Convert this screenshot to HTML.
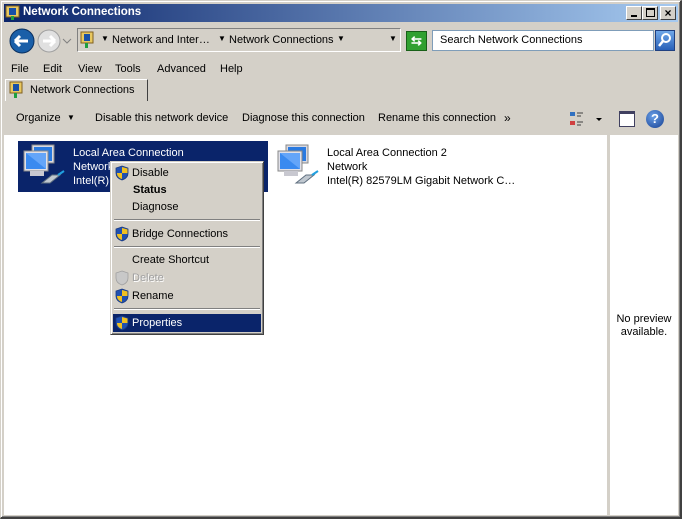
<!DOCTYPE html>
<html><head><meta charset="utf-8"><style>
*{margin:0;padding:0;box-sizing:border-box}
body{width:682px;height:519px;overflow:hidden;background:#d4d0c8;font-family:"Liberation Sans",sans-serif;font-size:11px;color:#000;position:relative}
.a{position:absolute}
.t{white-space:nowrap}
</style></head><body>
<div class="a" style="left:0;top:0;width:682px;height:519px;border-top:1px solid #d4d0c8;border-left:1px solid #d4d0c8;border-right:2px solid #404040;border-bottom:2px solid #404040;box-shadow:inset 1px 1px 0 #fff,inset -1px -1px 0 #808080"></div>
<div class="a" style="left:4px;top:4px;width:674px;height:18px;background:linear-gradient(90deg,#0a246a,#a6caf0)"></div>
<svg class="a" style="left:5px;top:5px" width="16" height="16"><rect x="1" y="1" width="13" height="11" fill="#e8c860" stroke="#806020"/><rect x="4" y="3" width="7" height="7" fill="#1850a8"/><rect x="6" y="11" width="3" height="4" fill="#20a040"/></svg>
<div class="a t" style="left:23px;top:6px;color:#fff;font-weight:bold;font-size:11.5px">Network Connections</div>
<div class="a" style="left:626px;top:6px;width:16px;height:14px;background:#d4d0c8;border:1px solid;border-color:#fff #404040 #404040 #fff"><div class="a" style="left:4px;top:8px;width:6px;height:2px;background:#000"></div></div>
<div class="a" style="left:642px;top:6px;width:16px;height:14px;background:#d4d0c8;border:1px solid;border-color:#fff #404040 #404040 #fff"><div class="a" style="left:3px;top:1px;width:9px;height:9px;border:1px solid #000;border-top-width:2px"></div></div>
<div class="a" style="left:660px;top:6px;width:16px;height:14px;background:#d4d0c8;border:1px solid;border-color:#fff #404040 #404040 #fff;font-size:12px;font-weight:bold;text-align:center;line-height:12px">×</div>
<svg class="a" style="left:7px;top:27px" width="70" height="28">
<circle cx="15" cy="14" r="12" fill="#1a5fa8" stroke="#0a3060"/><path d="M8 14h13M8 14l5-5M8 14l5 5" stroke="#fff" stroke-width="3" fill="none"/>
<circle cx="42" cy="14" r="11" fill="#e0e0e0" stroke="#a0a0a0"/><path d="M48 14h-12M48 14l-5-5M48 14l-5 5" stroke="#fff" stroke-width="3" fill="none"/>
<path d="M56 12l4 4 4-4" stroke="#808080" fill="none"/></svg>
<div class="a" style="left:77px;top:28px;width:324px;height:24px;background:#d4d0c8;border:1px solid;border-color:#808080 #fff #fff #808080"></div>
<svg class="a" style="left:80px;top:31px" width="16" height="18"><rect x="1" y="1" width="12" height="11" fill="#e8c860" stroke="#806020"/><rect x="4" y="3" width="6" height="7" fill="#1850a8"/><rect x="5" y="12" width="3" height="5" fill="#20a040"/></svg>
<div class="a t" style="left:101px;top:34px;font-size:8px">▼</div>
<div class="a t" style="left:112px;top:34px">Network and Inter…</div>
<div class="a t" style="left:218px;top:34px;font-size:8px">▼</div>
<div class="a t" style="left:229px;top:34px">Network Connections</div>
<div class="a t" style="left:337px;top:34px;font-size:8px">▼</div>
<div class="a t" style="left:389px;top:34px;font-size:8px">▼</div>
<div class="a" style="left:406px;top:31px;width:21px;height:20px;background:#30a030;border:1px solid #186018;color:#fff;font-size:13px;text-align:center;line-height:18px;font-weight:bold">⇆</div>
<div class="a" style="left:432px;top:30px;width:222px;height:21px;background:#fff;border:1px solid #7f9db9"></div>
<div class="a t" style="left:440px;top:34px">Search Network Connections</div>
<div class="a" style="left:655px;top:30px;width:20px;height:21px;background:linear-gradient(#70a8e8,#2860b8);border:1px solid #204080"></div>
<svg class="a" style="left:657px;top:32px" width="16" height="17"><circle cx="9" cy="6" r="4" fill="none" stroke="#fff" stroke-width="2"/><path d="M6 9l-4 5" stroke="#fff" stroke-width="2.5"/></svg>
<div class="a t" style="left:11px;top:63px">File</div>
<div class="a t" style="left:43px;top:63px">Edit</div>
<div class="a t" style="left:78px;top:63px">View</div>
<div class="a t" style="left:115px;top:63px">Tools</div>
<div class="a t" style="left:157px;top:63px">Advanced</div>
<div class="a t" style="left:220px;top:63px">Help</div>
<div class="a" style="left:5px;top:79px;width:143px;height:22px;border-top:1px solid #fff;border-left:1px solid #fff;border-right:1px solid #404040"></div>
<svg class="a" style="left:9px;top:81px" width="16" height="18"><rect x="1" y="1" width="12" height="11" fill="#e8c860" stroke="#806020"/><rect x="4" y="3" width="6" height="7" fill="#1850a8"/><rect x="5" y="12" width="3" height="5" fill="#20a040"/></svg>
<div class="a t" style="left:30px;top:84px">Network Connections</div>
<div class="a t" style="left:16px;top:112px">Organize</div>
<div class="a t" style="left:67px;top:113px;font-size:8px">▼</div>
<div class="a t" style="left:95px;top:112px">Disable this network device</div>
<div class="a t" style="left:242px;top:112px">Diagnose this connection</div>
<div class="a t" style="left:378px;top:112px">Rename this connection</div>
<div class="a t" style="left:504px;top:111px;font-size:12px">»</div>
<svg class="a" style="left:568px;top:110px" width="40" height="18"><rect x="2" y="2" width="5" height="4" fill="#3070c0"/><rect x="2" y="11" width="5" height="4" fill="#d04040"/><path d="M9 3h6M9 6h4M9 12h6M9 15h4" stroke="#404040"/><path d="M28 8l3 3 3-3z" fill="#000"/></svg>
<div class="a" style="left:619px;top:111px;width:16px;height:16px;background:#fff;border:1px solid #404060;border-top-width:3px"></div>
<div class="a" style="left:646px;top:110px;width:18px;height:18px;border-radius:50%;background:radial-gradient(circle at 40% 35%,#6aa0e8,#163f90);color:#fff;font-weight:bold;text-align:center;line-height:18px;font-size:13px">?</div>
<div class="a" style="left:4px;top:135px;width:603px;height:380px;background:#fff"></div>
<div class="a" style="left:610px;top:135px;width:68px;height:380px;background:#fff"></div>
<div class="a" style="left:612px;top:313px;width:64px;text-align:center;line-height:13px">No preview available.</div>
<div class="a" style="left:18px;top:141px;width:250px;height:51px;background:#0a246a"></div>
<svg class="a" style="left:22px;top:143px" width="44" height="46">
<rect x="10" y="2" width="22" height="18" fill="#d8d8e0" stroke="#888"/><rect x="12" y="4" width="18" height="14" fill="#2a7ae0"/>
<rect x="2" y="8" width="24" height="20" fill="#e0e0e8" stroke="#888"/><rect x="4" y="10" width="20" height="16" fill="#3a8af0"/><path d="M4 10l20 16V10z" fill="#80b8ff" opacity=".6"/>
<rect x="8" y="28" width="14" height="5" fill="#c8c8d0"/>
<path d="M20 40l10-8 8 0-10 8z" fill="#c0c8d0" stroke="#607080"/><path d="M36 32l6-4" stroke="#20a0e0" stroke-width="2"/></svg>
<div class="a t" style="left:73px;top:147px;color:#fff">Local Area Connection</div>
<div class="a t" style="left:73px;top:161px;color:#fff">Network</div>
<div class="a t" style="left:73px;top:175px;color:#fff">Intel(R)</div>
<svg class="a" style="left:276px;top:143px" width="44" height="46">
<rect x="10" y="2" width="22" height="18" fill="#d8d8e0" stroke="#888"/><rect x="12" y="4" width="18" height="14" fill="#2a7ae0"/>
<rect x="2" y="8" width="24" height="20" fill="#e0e0e8" stroke="#888"/><rect x="4" y="10" width="20" height="16" fill="#3a8af0"/><path d="M4 10l20 16V10z" fill="#80b8ff" opacity=".6"/>
<rect x="8" y="28" width="14" height="5" fill="#c8c8d0"/>
<path d="M20 40l10-8 8 0-10 8z" fill="#c0c8d0" stroke="#607080"/><path d="M36 32l6-4" stroke="#20a0e0" stroke-width="2"/></svg>
<div class="a t" style="left:327px;top:147px">Local Area Connection 2</div>
<div class="a t" style="left:327px;top:161px">Network</div>
<div class="a t" style="left:327px;top:175px">Intel(R) 82579LM Gigabit Network C…</div>
<div class="a" style="left:110px;top:161px;width:154px;height:174px;background:#d4d0c8;border:1px solid;border-color:#d4d0c8 #404040 #404040 #d4d0c8;box-shadow:inset 1px 1px 0 #fff,inset -1px -1px 0 #808080"></div>
<svg width="0" height="0" style="position:absolute"><defs><g id="sh"><path d="M7 1l6 2v5c0 4-3 6-6 7-3-1-6-3-6-7V3z" fill="#2050b0" stroke="#1a3a80" stroke-width=".8"/><path d="M7 2l5.5 1.5V8H7z" fill="#f0c020"/><path d="M7 8v6c-3-1-5-3-5-6z" fill="#f0c020"/></g><g id="shg"><path d="M7 1l6 2v5c0 4-3 6-6 7-3-1-6-3-6-7V3z" fill="#c8c8c8" stroke="#a0a0a0" stroke-width=".8"/></g></defs></svg>
<svg class="a" style="left:115px;top:165px" width="14" height="16"><use href="#sh"/></svg>
<div class="a t" style="left:132px;top:167px">Disable</div>
<div class="a t" style="left:133px;top:184px;font-weight:bold">Status</div>
<div class="a t" style="left:132px;top:201px">Diagnose</div>
<div class="a" style="left:114px;top:219px;width:146px;height:2px;border-top:1px solid #808080;border-bottom:1px solid #fff"></div>
<svg class="a" style="left:115px;top:226px" width="14" height="16"><use href="#sh"/></svg>
<div class="a t" style="left:132px;top:228px">Bridge Connections</div>
<div class="a" style="left:114px;top:246px;width:146px;height:2px;border-top:1px solid #808080;border-bottom:1px solid #fff"></div>
<div class="a t" style="left:132px;top:254px">Create Shortcut</div>
<svg class="a" style="left:115px;top:270px" width="14" height="16"><use href="#shg"/></svg>
<div class="a t" style="left:132px;top:272px;color:#a0a0a0;text-shadow:1px 1px 0 #fff">Delete</div>
<svg class="a" style="left:115px;top:288px" width="14" height="16"><use href="#sh"/></svg>
<div class="a t" style="left:132px;top:290px">Rename</div>
<div class="a" style="left:114px;top:308px;width:146px;height:2px;border-top:1px solid #808080;border-bottom:1px solid #fff"></div>
<div class="a" style="left:113px;top:314px;width:148px;height:18px;background:#0a246a"></div>
<svg class="a" style="left:115px;top:315px" width="14" height="16"><use href="#sh"/></svg>
<div class="a t" style="left:132px;top:317px;color:#fff">Properties</div>
</body></html>
